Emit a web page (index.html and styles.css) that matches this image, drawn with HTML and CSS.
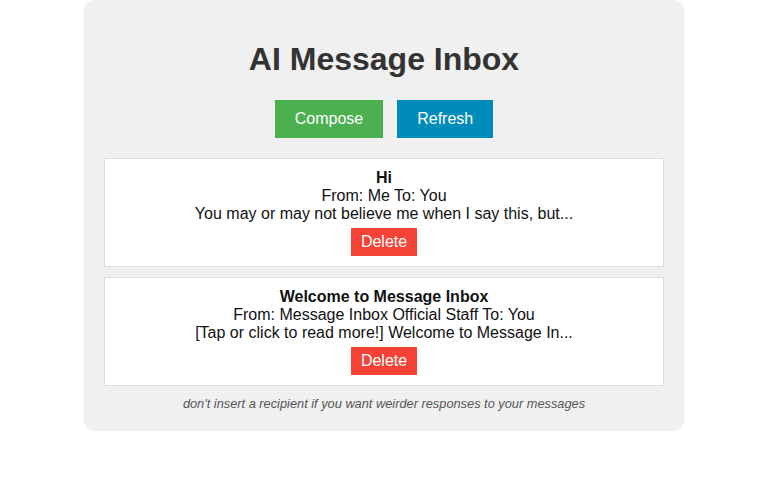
FILE: index.html
```html
<!DOCTYPE html>
<html lang="en">
<head>
    <meta charset="UTF-8">
    <meta name="viewport" content="width=device-width, initial-scale=1.0">
    <title>AI Message Inbox</title>
    <link rel="stylesheet" href="styles.css">
</head>
<body>
    <div class="container">
        <h1>AI Message Inbox</h1>
        <div class="actions">
            <button class="compose-btn">Compose</button>
            <button class="refresh-btn">Refresh</button>
        </div>
        <div class="messages">
            <div class="message">
                <strong>Hi</strong>
                <div>From: Me To: You</div>
                <div>You may or may not believe me when I say this, but...</div>
                <button class="delete-btn">Delete</button>
            </div>
            <div class="message">
                <strong>Welcome to Message Inbox</strong>
                <div>From: Message Inbox Official Staff To: You</div>
                <div>[Tap or click to read more!] Welcome to Message In...</div>
                <button class="delete-btn">Delete</button>
            </div>
        </div>
        <p class="hint">don't insert a recipient if you want weirder responses to your messages</p>
    </div>
</body>
</html>
```

FILE: styles.css
```css
body {
    font-family: 'Liberation Sans', Arial, sans-serif;
    background-color: #ffffff;
    margin: 0;
    padding: 0;
}

.container {
    width: 600px;
    margin: 0 auto;
    padding: 20px;
    box-sizing: border-box;
    background-color: #f0f0f0;
    border-radius: 10px;
    text-align: center;
}

h1 {
    font-size: 32px;
    color: #333;
    margin: 21px 0 22px;
}

.actions {
    display: flex;
    justify-content: center;
    gap: 14px;
}

button {
    font-family: inherit;
    font-size: 16px;
    line-height: 18px;
    color: white;
    border: none;
    cursor: pointer;
}

.compose-btn,
.refresh-btn {
    padding: 10px 20px;
}

.compose-btn {
    background-color: #4caf50;
}

.refresh-btn {
    background-color: #008cba;
}

.messages {
    margin-top: 20px;
}

.message {
    background-color: #fff;
    border: 1px solid #ddd;
    padding: 10px;
    margin-bottom: 10px;
    font-size: 16px;
    line-height: 18px;
    color: #111;
    display: flex;
    flex-direction: column;
    align-items: center;
}

.delete-btn {
    background-color: #f44336;
    padding: 5px 10px;
    margin-top: 5px;
}

.hint {
    margin: 0;
    font-size: 12.8px;
    line-height: 15px;
    font-style: italic;
    color: #555;
}
```
